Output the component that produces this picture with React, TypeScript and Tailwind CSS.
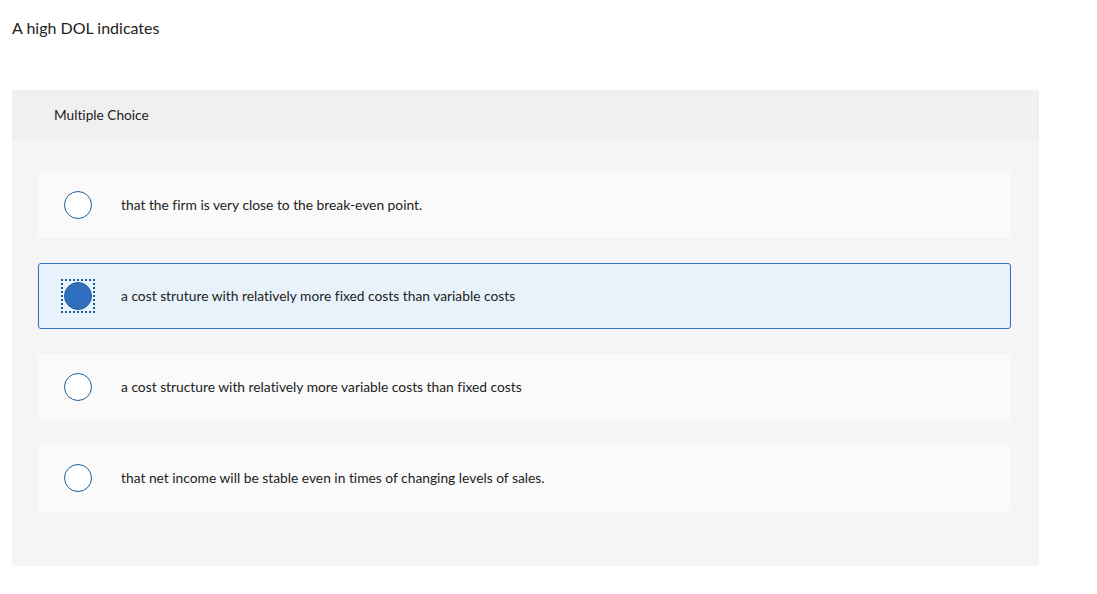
const options = [
  { text: 'that the firm is very close to the break-even point.', selected: false },
  { text: 'a cost struture with relatively more fixed costs than variable costs', selected: true },
  { text: 'a cost structure with relatively more variable costs than fixed costs', selected: false },
  { text: 'that net income will be stable even in times of changing levels of sales.', selected: false },
];

function Radio({ selected }: { selected: boolean }) {
  if (selected) {
    return (
      <div className="flex h-[34px] w-[34px] items-center justify-center outline-2 outline-dotted outline-[#1d5aa6] -outline-offset-2">
        <div className="h-[28px] w-[28px] rounded-full border-[1.5px] border-[#1f5f99] bg-[#2f6ebd]" />
      </div>
    );
  }
  return (
    <div className="flex h-[34px] w-[34px] items-center justify-center">
      <div className="h-[28px] w-[28px] rounded-full border-[1.5px] border-[#1f5f99] bg-white" />
    </div>
  );
}

export default function App() {
  return (
    <div className="min-h-screen bg-white font-['Lato',sans-serif] text-[#222] [font-variant-ligatures:none]">
      <div className="px-3 pt-[18px]">
        <h1 className="text-[16px] leading-5">A high DOL indicates</h1>
      </div>
      <div className="mx-3 mt-[52px] w-[1027px] overflow-hidden rounded-[3px] bg-[#f5f5f5]">
        <div className="flex h-[50px] items-center bg-[#f0f0f0] px-[42px]">
          <span className="text-[13.7px]">Multiple Choice</span>
        </div>
        <div className="flex flex-col gap-[25px] pb-[55px] pl-[26px] pr-[28px] pt-[32px]">
          {options.map((o) => (
            <div
              key={o.text}
              className={
                o.selected
                  ? 'flex h-[66px] items-center rounded-[3px] border border-[#2f6fc4] bg-[#e8f2fb] pl-[22px]'
                  : 'flex h-[66px] items-center rounded-[3px] border border-transparent bg-[#fafafa] pl-[22px]'
              }
            >
              <Radio selected={o.selected} />
              <span className="ml-[26px] text-[13.8px]">{o.text}</span>
            </div>
          ))}
        </div>
      </div>
    </div>
  );
}
